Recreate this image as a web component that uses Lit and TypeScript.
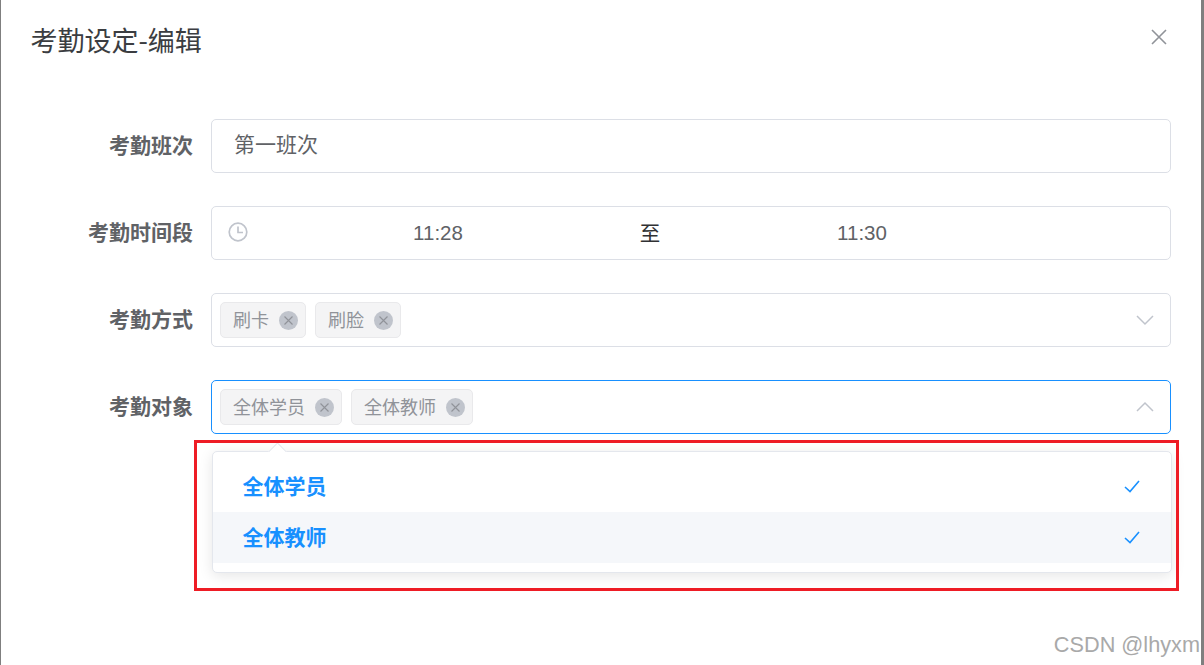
import { LitElement, html, css, svg } from 'lit';
import { customElement } from 'lit/decorators.js';

const closeIcon = svg`<path d="M2 2 L16 16 M16 2 L2 16" fill="none" stroke="currentColor" stroke-width="1.6"/>`;

@customElement('app-root')
export class AppRoot extends LitElement {
  static styles = css`
    :host {
      display: block;
      position: relative;
      width: 1204px;
      height: 665px;
      overflow: hidden;
      background: #7f7f7f;
      font-family: "Noto Sans CJK SC", "Liberation Sans", sans-serif;
      color: #606266;
    }
    .dialog {
      box-sizing: border-box;
      width: 1200px;
      height: 665px;
      margin-left: 1px;
      background: #fff;
    }
    .header {
      display: flex;
      justify-content: space-between;
      align-items: flex-start;
      height: 119px;
      box-sizing: border-box;
      padding: 20px 33px 0 29.5px;
    }
    .title {
      font-size: 27px;
      line-height: 40px;
      color: #3b3d41;
    }
    .close {
      width: 18px;
      height: 18px;
      margin-top: 8px;
      color: #909399;
    }
    .row {
      display: flex;
      align-items: center;
      height: 54px;
      margin-bottom: 33px;
    }
    .label {
      width: 192px;
      flex: none;
      padding-bottom: 4px;
      text-align: right;
      font-size: 21px;
      font-weight: 700;
      color: #606266;
    }
    .control {
      box-sizing: border-box;
      display: flex;
      align-items: center;
      position: relative;
      width: 960px;
      height: 54px;
      margin-left: 18px;
      border: 1px solid #dcdfe6;
      border-radius: 5px;
      font-size: 21px;
    }
    .control.focus {
      border-color: #1890ff;
    }
    .text {
      padding: 0 0 6px 22px;
    }
    .clock {
      width: 22px;
      height: 22px;
      margin: 0 0 2px 15px;
      flex: none;
      color: #c0c4cc;
    }
    .time {
      width: 374px;
      flex: none;
      text-align: center;
      font-family: "Liberation Sans", sans-serif;
      font-size: 20.5px;
    }
    .first {
      margin-left: 2px;
    }
    .sep {
      width: 50px;
      flex: none;
      padding-bottom: 2px;
      text-align: center;
      color: #303133;
      font-size: 20.5px;
    }
    .tags {
      display: flex;
      gap: 9px;
      padding-left: 8px;
    }
    .tag {
      box-sizing: border-box;
      display: flex;
      align-items: center;
      height: 36px;
      padding: 0 7px 0 12px;
      gap: 10px;
      background: #f4f4f5;
      border: 1px solid #e9e9eb;
      border-radius: 5px;
      font-size: 18px;
      color: #909399;
    }
    .tag-name {
      padding-bottom: 3px;
    }
    .tag-close {
      width: 19px;
      height: 19px;
      flex: none;
      border-radius: 50%;
      background: #c0c4cc;
      color: #909399;
    }
    .arrow {
      position: absolute;
      right: 16px;
      top: 19px;
      width: 18px;
      height: 14px;
      color: #c0c4cc;
    }
    .popper {
      position: absolute;
      left: 0;
      top: 70px;
      box-sizing: border-box;
      width: 960px;
      height: 122px;
      padding: 9px 0;
      background: #fff;
      border: 1px solid #e4e7ed;
      border-radius: 5px;
      box-shadow: 0 3px 14px rgba(0, 0, 0, 0.1);
    }
    .popper::before {
      content: '';
      position: absolute;
      left: 58px;
      top: -7px;
      width: 12px;
      height: 12px;
      background: #fff;
      border-left: 1px solid #e4e7ed;
      border-top: 1px solid #e4e7ed;
      transform: rotate(45deg);
    }
    .option {
      display: flex;
      justify-content: space-between;
      align-items: center;
      height: 51px;
      padding: 0 31px 0 29.5px;
      font-size: 21px;
      font-weight: 700;
      color: #1890ff;
    }
    .option.hover {
      background: #f5f7fa;
    }
    .option-name {
      padding-bottom: 4px;
    }
    .check {
      width: 16px;
      height: 14px;
      margin-bottom: 2px;
      color: #1890ff;
    }
    .mark {
      position: absolute;
      left: 194px;
      top: 440px;
      box-sizing: border-box;
      width: 985px;
      height: 151px;
      border: 3px solid #ee1c25;
    }
    .watermark {
      position: absolute;
      right: 4px;
      top: 631px;
      font-family: "Liberation Sans", sans-serif;
      font-size: 21.7px;
      line-height: 28px;
      color: #a9a9a9;
      text-shadow: 0 0 2px #fff;
    }
  `;

  private renderTag(name: string) {
    return html`
      <span class="tag">
        <span class="tag-name">${name}</span>
        <svg class="tag-close" viewBox="0 0 19 19">
          <path d="M5.5 5.5 L13.5 13.5 M13.5 5.5 L5.5 13.5" fill="none" stroke="currentColor" stroke-width="1.1"/>
        </svg>
      </span>
    `;
  }

  private renderOption(name: string, hover = false) {
    return html`
      <div class="option ${hover ? 'hover' : ''}">
        <span class="option-name">${name}</span>
        <svg class="check" viewBox="0 0 16 14">
          <path d="M1 8 L6 12.5 L15 2" fill="none" stroke="currentColor" stroke-width="1.6"/>
        </svg>
      </div>
    `;
  }

  render() {
    return html`
      <div class="dialog">
        <div class="header">
          <div class="title">考勤设定-编辑</div>
          <svg class="close" viewBox="0 0 18 18">${closeIcon}</svg>
        </div>
        <div class="row">
          <div class="label">考勤班次</div>
          <div class="control"><span class="text">第一班次</span></div>
        </div>
        <div class="row">
          <div class="label">考勤时间段</div>
          <div class="control">
            <svg class="clock" viewBox="0 0 22 22">
              <circle cx="11" cy="11" r="8.8" fill="none" stroke="currentColor" stroke-width="1.7"/>
              <path d="M11 5.5 V11.5 H16" fill="none" stroke="currentColor" stroke-width="1.7"/>
            </svg>
            <span class="time first">11:28</span>
            <span class="sep">至</span>
            <span class="time">11:30</span>
          </div>
        </div>
        <div class="row">
          <div class="label">考勤方式</div>
          <div class="control">
            <div class="tags">${this.renderTag('刷卡')}${this.renderTag('刷脸')}</div>
            <svg class="arrow" viewBox="0 0 18 14"><path d="M1 3 L9 11 L17 3" fill="none" stroke="currentColor" stroke-width="1.5"/></svg>
          </div>
        </div>
        <div class="row">
          <div class="label">考勤对象</div>
          <div class="control focus">
            <div class="tags">${this.renderTag('全体学员')}${this.renderTag('全体教师')}</div>
            <svg class="arrow" viewBox="0 0 18 14"><path d="M1 11 L9 3 L17 11" fill="none" stroke="currentColor" stroke-width="1.5"/></svg>
            <div class="popper">
              ${this.renderOption('全体学员')}
              ${this.renderOption('全体教师', true)}
            </div>
          </div>
        </div>
      </div>
      <div class="mark"></div>
      <div class="watermark">CSDN @lhyxm</div>
    `;
  }
}
